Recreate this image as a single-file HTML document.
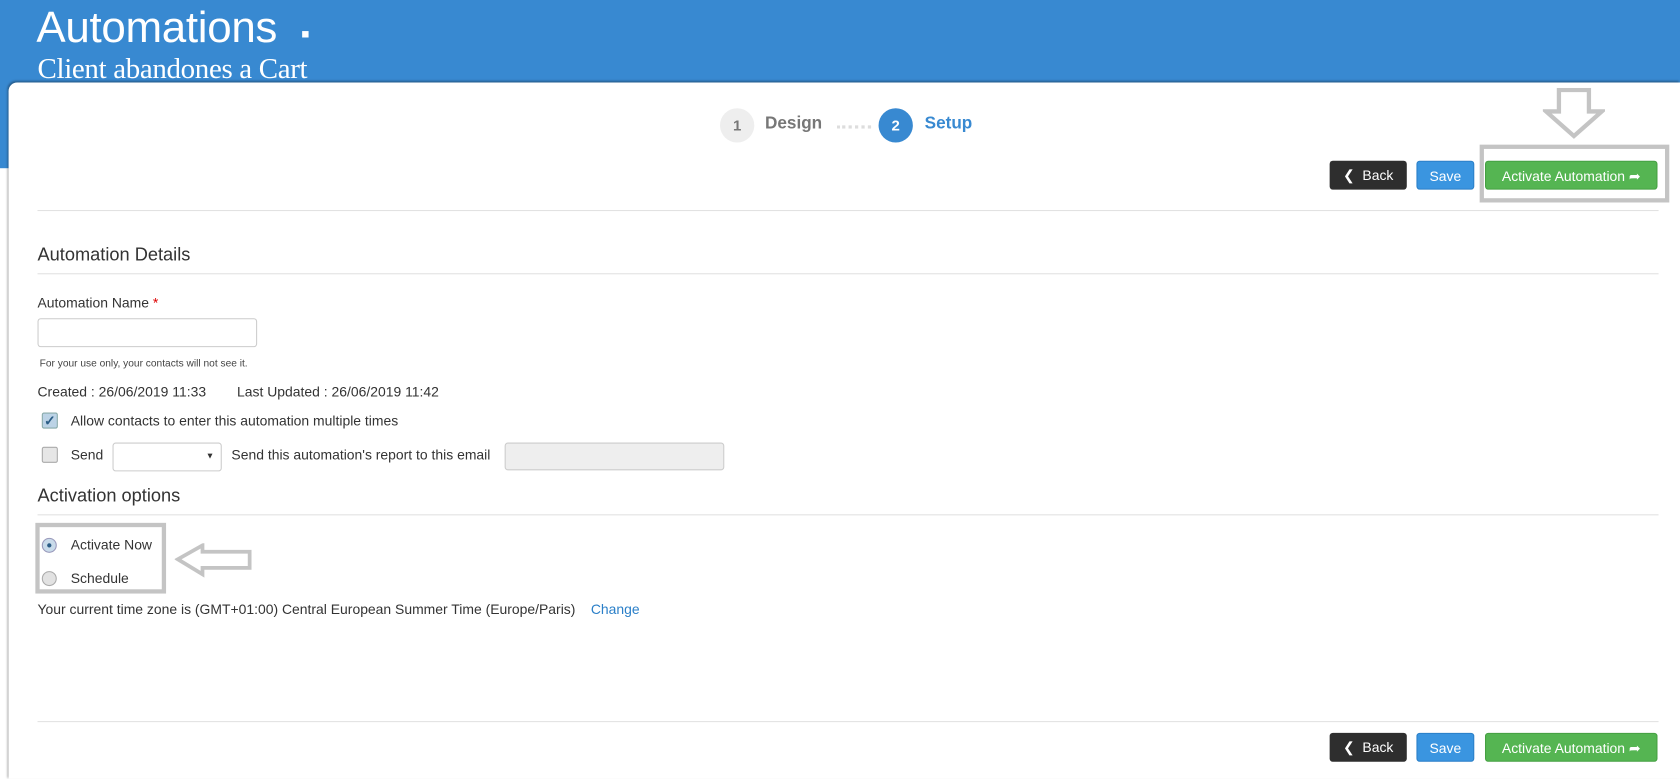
<!DOCTYPE html>
<html><head><meta charset="utf-8"><style>
html,body{margin:0;padding:0;width:1680px;height:770px;overflow:hidden;background:#fff;font-family:"Liberation Sans",Arial,sans-serif;}
#s{position:absolute;left:0;top:0;width:1568px;height:719px;transform:scale(1.07143);transform-origin:0 0;}
.a{position:absolute;}
.t{font-size:13px;color:#333;}
.btn{position:absolute;top:150px;height:27px;border-radius:3px;color:#fff;font-size:13px;line-height:27px;text-align:center;box-sizing:border-box;}
.hr{position:absolute;left:35px;right:20px;height:1px;background:#e2e2e2;}
</style></head><body><div id="s">
<div class="a" style="left:0;top:0;width:1568px;height:157px;background:#3889d1"></div>
<div class="a" style="left:34px;top:2px;font-size:41px;color:#fff;letter-spacing:-0.3px">Automations</div>
<div class="a" style="left:282px;top:29px;width:6px;height:6px;background:#fff"></div>
<div class="a" style="left:35px;top:49px;font-size:27px;color:#fff;font-family:'Liberation Serif',serif;letter-spacing:-0.3px">Client abandones a Cart</div>
<div class="a" style="left:8px;top:77px;width:1560px;height:650px;background:#fff;border-top-left-radius:8px;box-shadow:-1px -1px 2px rgba(0,0,0,.35)"></div>
<div class="a" style="left:672px;top:101px;width:32px;height:32px;border-radius:50%;background:#eee;color:#777;font-weight:bold;font-size:14px;text-align:center;line-height:32px">1</div>
<div class="a" style="left:714px;top:107px;font-size:16px;font-weight:bold;color:#777">Design</div>
<div class="a" style="left:781px;top:117px;width:32px;border-top:3px dotted #ddd"></div>
<div class="a" style="left:820px;top:101px;width:32px;height:32px;border-radius:50%;background:#3889d1;color:#fff;font-weight:bold;font-size:14px;text-align:center;line-height:32px">2</div>
<div class="a" style="left:863px;top:107px;font-size:16px;font-weight:bold;color:#3889d1">Setup</div>
<svg class="a" style="left:1440px;top:82px" width="58" height="48"><path d="M15 2h28v20h12L29 45 3 22h12z" fill="none" stroke="#c4c4c4" stroke-width="4"/></svg>
<div class="a" style="left:1381px;top:135px;width:177px;height:54px;border:4px solid #c4c4c4;box-sizing:border-box"></div>
<div class="btn" style="left:1241px;width:72px;background:#2e2e2e">&#10094;&nbsp; Back</div>
<div class="btn" style="left:1322px;width:54px;background:#3a95e0;border:1px solid #2a7fc8">Save</div>
<div class="btn" style="left:1386px;width:161px;background:#55b552;border:1px solid #45a042">Activate Automation ➦</div>
<div class="hr" style="top:196px"></div>
<div class="a" style="left:35px;top:228px;font-size:17px;color:#333">Automation Details</div>
<div class="hr" style="top:255px"></div>
<div class="a t" style="left:35px;top:275px">Automation Name <span style="color:#d00">*</span></div>
<div class="a" style="left:35px;top:297px;width:205px;height:27px;border:1px solid #ccc;border-radius:3px;box-sizing:border-box"></div>
<div class="a" style="left:37px;top:334px;font-size:9.5px;color:#444">For your use only, your contacts will not see it.</div>
<div class="a t" style="left:35px;top:358px">Created : 26/06/2019 11:33&nbsp;&nbsp;&nbsp;&nbsp;&nbsp;&nbsp;&nbsp; Last Updated : 26/06/2019 11:42</div>
<div class="a" style="left:39px;top:385px;width:13px;height:13px;border:1px solid #8aa;border-radius:2px;background:#bcd3e6;color:#2b5d86;font-size:13px;line-height:13px;text-align:center;font-weight:bold">✓</div>
<div class="a t" style="left:66px;top:385px">Allow contacts to enter this automation multiple times</div>
<div class="a" style="left:39px;top:417px;width:13px;height:13px;border:1px solid #aaa;border-radius:2px;background:#e6e6e6"></div>
<div class="a t" style="left:66px;top:417px">Send</div>
<div class="a" style="left:105px;top:413px;width:102px;height:27px;border:1px solid #ccc;border-radius:3px;box-sizing:border-box"><span style="position:absolute;right:6px;top:7px;font-size:8px;color:#333">▼</span></div>
<div class="a t" style="left:216px;top:417px">Send this automation's report to this email</div>
<div class="a" style="left:471px;top:413px;width:205px;height:26px;border:1px solid #ccc;border-radius:3px;background:#eee;box-sizing:border-box"></div>
<div class="a" style="left:35px;top:453px;font-size:17px;color:#333">Activation options</div>
<div class="hr" style="top:480px"></div>
<div class="a" style="left:33px;top:488px;width:122px;height:66px;border:4px solid #c4c4c4;box-sizing:border-box"></div>
<div class="a" style="left:39px;top:502px;width:12px;height:12px;border-radius:50%;border:1px solid #99b;background:#c9dbea"><div style="margin:4px;width:4px;height:4px;border-radius:50%;background:#2b5d86"></div></div>
<div class="a t" style="left:66px;top:501px">Activate Now</div>
<div class="a" style="left:39px;top:533px;width:12px;height:12px;border-radius:50%;border:1px solid #aaa;background:#e2e2e2"></div>
<div class="a t" style="left:66px;top:532px">Schedule</div>
<svg class="a" style="left:163px;top:507px" width="72" height="32"><path d="M70 8H26V2L3 15l23 14v-6h44z" fill="none" stroke="#c4c4c4" stroke-width="3.5"/></svg>
<div class="a t" style="left:35px;top:561px">Your current time zone is (GMT+01:00) Central European Summer Time (Europe/Paris)&nbsp;&nbsp;&nbsp; <span style="color:#2a7fc8">Change</span></div>
<div class="hr" style="top:673px"></div>
<div class="btn" style="top:684px;left:1241px;width:72px;background:#2e2e2e">&#10094;&nbsp; Back</div>
<div class="btn" style="top:684px;left:1322px;width:54px;background:#3a95e0;border:1px solid #2a7fc8">Save</div>
<div class="btn" style="top:684px;left:1386px;width:161px;background:#55b552;border:1px solid #45a042">Activate Automation ➦</div>
</div></body></html>
